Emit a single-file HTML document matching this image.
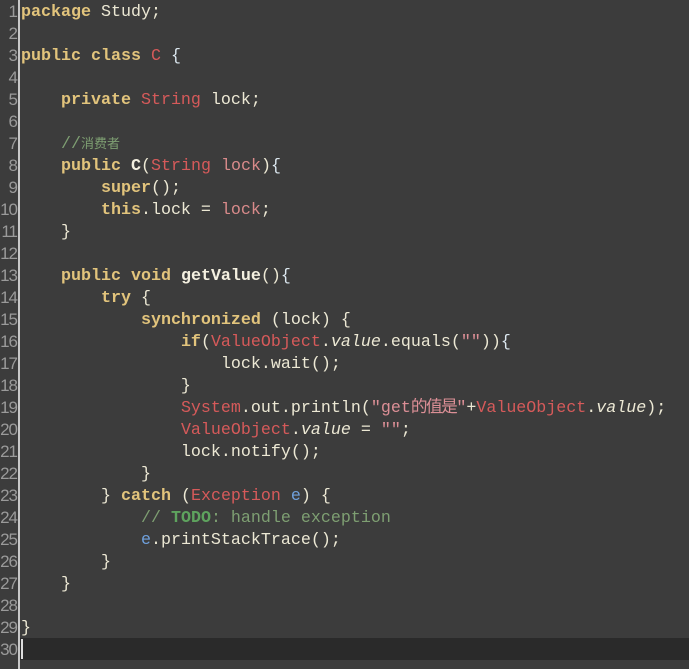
<!DOCTYPE html><html><head><meta charset="utf-8"><style>
body{margin:0;background:#3c3c3c;width:689px;height:669px;overflow:hidden;position:relative}
.g{position:absolute;left:18px;top:0;width:2px;height:669px;background:#c8c8c8}
.cur{position:absolute;left:20px;top:638px;width:669px;height:22px;background:#2a2a2a}
.caret{position:absolute;left:21px;top:639px;width:2px;height:20px;background:#ddd}
.ln{position:absolute;left:0;top:1px;width:17px;text-align:right;font:17px/22px "Liberation Sans Narrow","Liberation Sans",sans-serif;color:#9a9a9a;white-space:pre;letter-spacing:-1px}
pre{position:absolute;left:21px;top:2px;margin:0;font:16.67px/22px "Liberation Mono","Noto Sans CJK SC",monospace;color:#ece8d4}
.k{color:#e2c47c;font-weight:bold}.t{color:#d65a5a}.p{color:#d88a8a}.b{color:#dce8f0}.s{color:#dc8f96}.i{font-style:italic}
.c{color:#7e9f72}.td{color:#5ea35e;font-weight:bold}.e{color:#6fa0dc}.m{font-weight:bold;color:#f4f0e0}
.z{letter-spacing:-1.5px}.zc{font-size:13px;letter-spacing:0}
</style></head><body>
<div class="cur"></div><div class="g"></div><div class="caret"></div>
<div class="ln">1
2
3
4
5
6
7
8
9
10
11
12
13
14
15
16
17
18
19
20
21
22
23
24
25
26
27
28
29
30</div>
<pre><span class="k">package</span> Study;

<span class="k">public</span> <span class="k">class</span> <span class="t">C</span> <span class="b">{</span>

    <span class="k">private</span> <span class="t">String</span> lock;

    <span class="c">//<span class="zc">消费者</span></span>
    <span class="k">public</span> <span class="m">C</span>(<span class="t">String</span> <span class="p">lock</span>)<span class="b">{</span>
        <span class="k">super</span>();
        <span class="k">this</span>.lock = <span class="p">lock</span>;
    }

    <span class="k">public</span> <span class="k">void</span> <span class="m">getValue</span>()<span class="b">{</span>
        <span class="k">try</span> {
            <span class="k">synchronized</span> (lock) {
                <span class="k">if</span>(<span class="t">ValueObject</span>.<span class="i">value</span>.equals(<span class="s">""</span>))<span class="b">{</span>
                    lock.wait();
                }
                <span class="t">System</span>.out.println(<span class="s">"get<span class="z">的值是</span>"</span>+<span class="t">ValueObject</span>.<span class="i">value</span>);
                <span class="t">ValueObject</span>.<span class="i">value</span> = <span class="s">""</span>;
                lock.notify();
            }
        } <span class="k">catch</span> (<span class="t">Exception</span> <span class="e">e</span>) {
            <span class="c">// <span class="td">TODO</span>: handle exception</span>
            <span class="e">e</span>.printStackTrace();
        }
    }

}
</pre>
</body></html>
